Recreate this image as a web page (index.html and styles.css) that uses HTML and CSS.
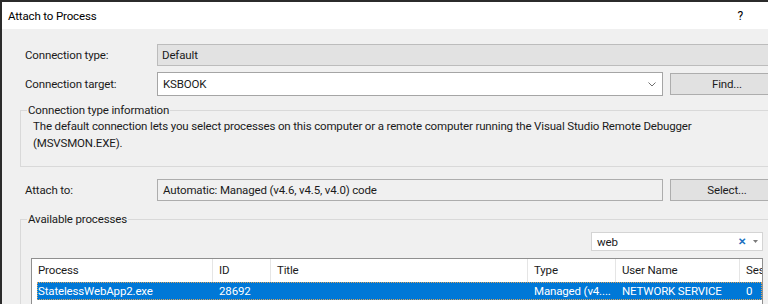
FILE: index.html
```html
<!DOCTYPE html>
<html lang="en">
<head>
    <meta charset="UTF-8">
    <meta name="viewport" content="width=device-width, initial-scale=1.0">
    <title>Attach to Process</title>
    <link rel="stylesheet" href="styles.css">
</head>
<body>

    <div class="dialog">
        <!-- title bar -->
        <div class="titlebar">
            <span class="title">Attach to Process</span>
            <span class="help">?</span>
        </div>

        <div class="dialog-body">
            <div class="row">
                <label>Connection type:</label>
                <div class="field disabled wide">Default</div>
            </div>

            <div class="row">
                <label>Connection target:</label>
                <div class="field combo">
                    <span>KSBOOK</span>
                    <svg class="chevron" width="8" height="5" viewBox="0 0 8 5">
                        <polyline points="0.5,0.5 4,4 7.5,0.5" fill="none" stroke="#707070" stroke-width="1"/>
                    </svg>
                </div>
                <button class="btn">Find...</button>
            </div>

            <fieldset class="group info">
                <legend>Connection type information</legend>
                <p>The default connection lets you select processes on this computer or a remote computer running the Visual Studio Remote Debugger<br>(MSVSMON.EXE).</p>
            </fieldset>

            <div class="row attach">
                <label>Attach to:</label>
                <div class="field readonly">Automatic: Managed (v4.6, v4.5, v4.0) code</div>
                <button class="btn">Select...</button>
            </div>

            <fieldset class="group procs">
                <legend>Available processes</legend>
                <div class="procs-inner">
                    <div class="search">
                        <span class="search-text">web</span>
                        <span class="clear">&#x2715;</span>
                        <svg class="drop" width="5" height="3" viewBox="0 0 5 3">
                            <polygon points="0,0 5,0 2.5,3" fill="#7a7a7a"/>
                        </svg>
                    </div>

                    <div class="list">
                        <div class="list-head">
                            <div>Process</div>
                            <div>ID</div>
                            <div>Title</div>
                            <div>Type</div>
                            <div>User Name</div>
                            <div>Session</div>
                        </div>
                        <div class="list-row selected">
                            <div>StatelessWebApp2.exe</div>
                            <div>28692</div>
                            <div></div>
                            <div>Managed (v4....</div>
                            <div>NETWORK SERVICE</div>
                            <div>0</div>
                        </div>
                    </div>
                </div>
            </fieldset>
        </div>
    </div>

</body>
</html>
```

FILE: styles.css
```css
html, body {
    margin: 0;
    padding: 0;
    height: 100%;
    overflow: hidden;
}

body {
    background-color: #2b2b2b;
    font-family: Roboto, "Segoe UI", sans-serif;
    font-size: 11.5px;
    letter-spacing: -0.15px;
    color: #1b1b1b;
    padding: 2px 0 0 2px;
    box-sizing: border-box;
}

.dialog {
    width: 766px;
    height: 302px;
    background-color: #f0f0f0;
    overflow: hidden;
}

.titlebar {
    height: 27px;
    background-color: #fff;
    display: flex;
    align-items: center;
    padding: 0 25px 0 6px;
    color: #000;
}

.titlebar .help {
    margin-left: auto;
    font-size: 12px;
}

.dialog-body {
    padding: 15px 0 0 23px;
}

.row {
    display: flex;
    align-items: center;
    gap: 7px;
    margin-bottom: 6px;
}

.row label {
    flex: none;
    width: 125px;
    line-height: 16px;
}

.field {
    flex: none;
    box-sizing: border-box;
    width: 506px;
    height: 22px;
    border: 1px solid #adadad;
    padding: 0 5px;
    display: flex;
    align-items: center;
    white-space: nowrap;
}

.field.disabled {
    background-color: #e2e2e2;
    border-color: #bcbcbc;
    padding-left: 4px;
}

.field.wide {
    width: 640px;
}

.field.combo {
    height: 24px;
    background-color: #fff;
    border-color: #a5a5a5;
    justify-content: space-between;
    padding-right: 6px;
}

.field.readonly {
    background-color: #f0f0f0;
    border-color: #adadad;
}

.btn {
    flex: none;
    width: 114px;
    height: 22px;
    background-color: #e1e1e1;
    border: 1px solid #adadad;
    border-radius: 0;
    font-family: inherit;
    font-size: inherit;
    letter-spacing: inherit;
    color: #1b1b1b;
    padding: 0;
}

/* group boxes */
.group {
    border: 1px solid #d9d9d9;
    border-right: none;
    margin: 3px 0 0 -5px;
    padding: 0 0 14px 6px;
    min-width: 0;
}

.group legend {
    padding: 0 1px;
    line-height: 16px;
}

.info p {
    margin: 0 0 0 6px;
    line-height: 17px;
    white-space: nowrap;
}

.row.attach {
    margin-top: 12px;
}

.group.procs {
    margin-top: 10px;
    padding-bottom: 40px;
}

.procs-inner {
    margin-left: 4px;
    width: 732px;
    padding-top: 5px;
}

/* search box */
.search {
    box-sizing: border-box;
    width: 172px;
    height: 19px;
    margin-left: auto;
    background-color: #fff;
    border: 1px solid #d4d4d4;
    display: flex;
    align-items: center;
    padding: 0 4px 0 5px;
}

.search-text {
    flex: 1;
}

.search .clear {
    color: #1c6fc0;
    font-size: 10px;
    font-weight: bold;
    margin-right: 7px;
}

/* process list */
.list {
    box-sizing: border-box;
    margin-top: 7px;
    border: 1px solid #8f8f8f;
    background-color: #fff;
    height: 60px;
    overflow: hidden;
}

.list-head, .list-row {
    display: grid;
    grid-template-columns: 181px 58px 257px 88px 124px 80px;
    white-space: nowrap;
}

.list-head > div {
    height: 23px;
    line-height: 23px;
    padding-left: 6px;
    border-right: 1px solid #e5e5e5;
    overflow: hidden;
}

.list-row {
    grid-template-columns: 176px 58px 257px 88px 124px 80px;
    margin-left: 5px;
    height: 18px;
    line-height: 18px;
    outline: 1px dotted #d9a35c;
    outline-offset: -1px;
}

.list-row > div {
    padding-left: 6px;
    overflow: hidden;
}

.list-row > div:first-child {
    padding-left: 1px;
}

.list-row.selected {
    background-color: #0078d7;
    color: #fff;
}
```
